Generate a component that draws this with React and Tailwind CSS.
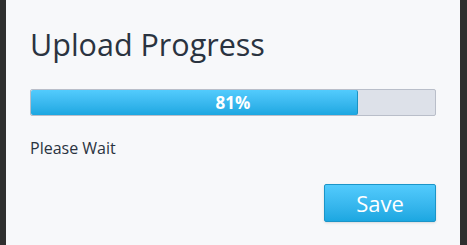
import React from 'react';

const ProgressBar = ({ value }) => (
  <div className="relative h-[27px] w-full rounded-[2px] border border-[#b9bec9] bg-[#dde1e9] overflow-hidden">
    <div
      className="h-full rounded-[2px] border-r border-[#1a93c4] bg-gradient-to-b from-[#52cbfd] to-[#1ba7e1]"
      style={{ width: `${value}%` }}
    />
    <span className="absolute inset-0 flex items-center justify-center text-[17px] font-bold text-white">
      {value}%
    </span>
  </div>
);

export default function App() {
  return (
    <div className="flex h-[245px] w-[467px] bg-[#2f2f2f] font-['Open_Sans',sans-serif]">
      <div className="ml-[6px] flex w-[454px] flex-col bg-[#f7f8fa] pl-[24px] pr-[24px] pt-[24px]">
        <h1 className="text-[30.5px] leading-[40px] text-[#2a3340]">Upload Progress</h1>
        <div className="mt-[25px]">
          <ProgressBar value={81} />
        </div>
        <p className="mt-[20px] text-[16px] text-[#2a3340]">Please Wait</p>
        <div className="mt-[24px] flex justify-end">
          <button className="h-[38px] w-[112px] rounded-[2px] border border-[#1b95c8] bg-gradient-to-b from-[#52cbfd] to-[#1ba7e1] text-[22px] text-white shadow-sm">
            Save
          </button>
        </div>
      </div>
    </div>
  );
}
